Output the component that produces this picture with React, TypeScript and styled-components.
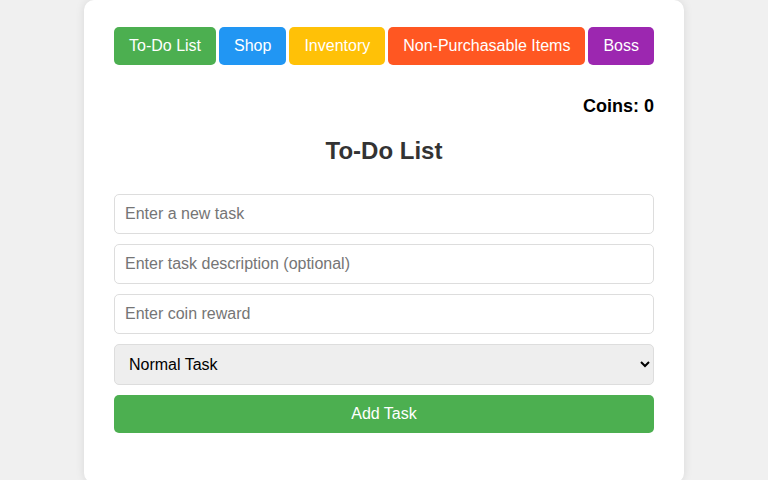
import React from 'react';
import styled, { createGlobalStyle } from 'styled-components';

const GlobalStyle = createGlobalStyle`
  body {
    margin: 0;
    background: #f0f0f0;
    font-family: "Liberation Sans", Arial, sans-serif;
  }
`;

const Card = styled.div`
  box-sizing: border-box;
  width: 600px;
  margin: 0 auto;
  padding: 27px 30px 50px;
  background: #fff;
  border-radius: 10px;
  box-shadow: 0 0 10px rgba(0, 0, 0, 0.1);
`;

const Nav = styled.nav`
  display: flex;
  justify-content: space-between;
`;

const NavButton = styled.button<{ $color: string }>`
  background: ${(p) => p.$color};
  color: #fff;
  border: none;
  border-radius: 5px;
  padding: 10px 15px;
  font-family: inherit;
  font-size: 16px;
  line-height: 18px;
  cursor: pointer;
`;

const Coins = styled.div`
  margin-top: 31px;
  text-align: right;
  font-size: 18px;
  font-weight: bold;
  line-height: 21px;
  color: #000;
`;

const Title = styled.h2`
  margin: 20px 0 29px;
  text-align: center;
  font-size: 24px;
  line-height: 28px;
  color: #333;
`;

const Form = styled.div`
  display: flex;
  flex-direction: column;
  gap: 10px;
`;

const Input = styled.input`
  box-sizing: border-box;
  width: 100%;
  height: 40px;
  padding: 10px;
  border: 1px solid #ddd;
  border-radius: 5px;
  font-family: inherit;
  font-size: 16px;
  color: #333;

  &::placeholder {
    color: #757575;
  }
`;

const Select = styled.select`
  box-sizing: border-box;
  width: 100%;
  height: 41px;
  padding: 10px;
  border: 1px solid #ddd;
  border-radius: 5px;
  background: #eee;
  font-family: inherit;
  font-size: 16px;
  color: #000;
`;

const AddButton = styled.button`
  height: 38px;
  border: none;
  border-radius: 5px;
  background: #4caf50;
  color: #fff;
  font-family: inherit;
  font-size: 16px;
  cursor: pointer;
`;

const tabs = [
  { label: 'To-Do List', color: '#4caf50' },
  { label: 'Shop', color: '#2196f3' },
  { label: 'Inventory', color: '#ffc107' },
  { label: 'Non-Purchasable Items', color: '#ff5722' },
  { label: 'Boss', color: '#9c27b0' },
];

export default function App() {
  return (
    <>
      <GlobalStyle />
      <Card>
        <Nav>
          {tabs.map((t) => (
            <NavButton key={t.label} $color={t.color}>
              {t.label}
            </NavButton>
          ))}
        </Nav>
        <Coins>Coins: 0</Coins>
        <Title>To-Do List</Title>
        <Form>
          <Input placeholder="Enter a new task" />
          <Input placeholder="Enter task description (optional)" />
          <Input placeholder="Enter coin reward" />
          <Select defaultValue="normal">
            <option value="normal">Normal Task</option>
            <option value="daily">Daily Task</option>
          </Select>
          <AddButton>Add Task</AddButton>
        </Form>
      </Card>
    </>
  );
}
